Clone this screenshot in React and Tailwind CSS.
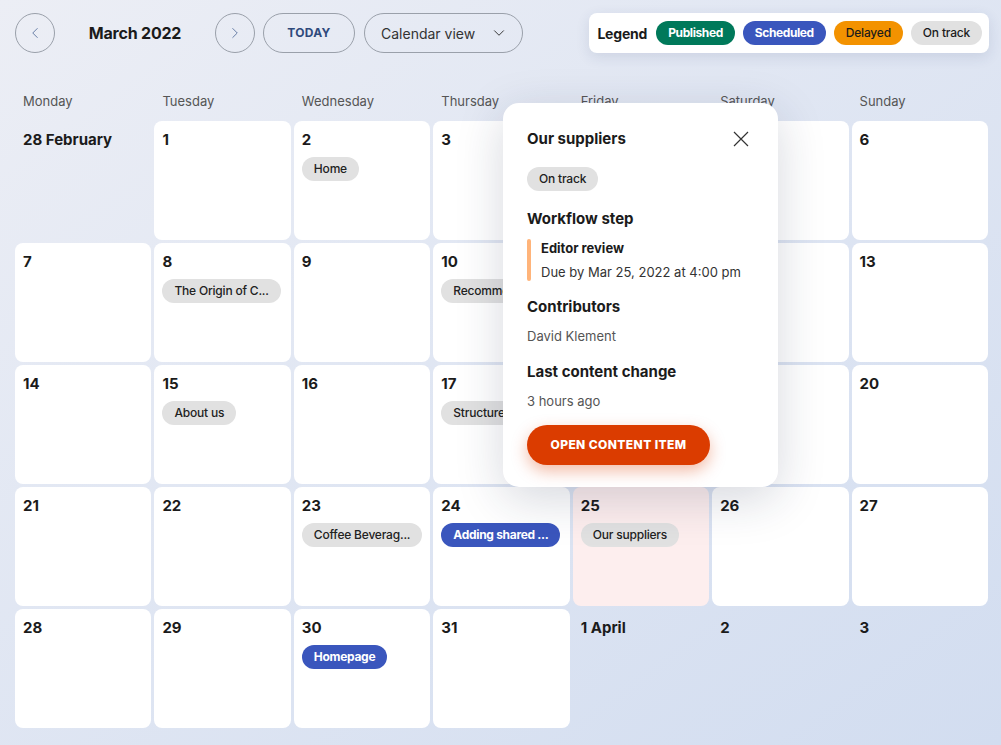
import React from 'react';
import { ChevronLeft, ChevronRight, ChevronDown } from 'lucide-react';

const DAYS = ['Monday', 'Tuesday', 'Wednesday', 'Thursday', 'Friday', 'Saturday', 'Sunday'];

const WEEKS = [
  [
    { label: '28 February', outside: true },
    { label: '1' },
    { label: '2', event: { title: 'Home' } },
    { label: '3' },
    { label: '4' },
    { label: '5' },
    { label: '6' },
  ],
  [
    { label: '7' },
    { label: '8', event: { title: 'The Origin of C...' } },
    { label: '9' },
    { label: '10', event: { title: 'Recommended...' } },
    { label: '11' },
    { label: '12' },
    { label: '13' },
  ],
  [
    { label: '14' },
    { label: '15', event: { title: 'About us' } },
    { label: '16' },
    { label: '17', event: { title: 'Structured content' } },
    { label: '18' },
    { label: '19' },
    { label: '20' },
  ],
  [
    { label: '21' },
    { label: '22' },
    { label: '23', event: { title: 'Coffee Beverag...' } },
    { label: '24', event: { title: 'Adding shared ...', scheduled: true } },
    { label: '25', today: true, event: { title: 'Our suppliers' } },
    { label: '26' },
    { label: '27' },
  ],
  [
    { label: '28' },
    { label: '29' },
    { label: '30', event: { title: 'Homepage', scheduled: true } },
    { label: '31' },
    { label: '1 April', outside: true },
    { label: '2', outside: true },
    { label: '3', outside: true },
  ],
];

function EventPill({ event }) {
  if (event.scheduled) {
    return (
      <div className="mt-[7px] inline-flex max-w-full h-6 items-center rounded-full bg-[#3a56bd] px-3 text-[12px] font-bold tracking-[-0.3px] text-white whitespace-nowrap overflow-hidden">
        {event.title}
      </div>
    );
  }
  return (
    <div className="mt-[7px] inline-flex max-w-full h-6 items-center rounded-full bg-[#e1e1e1] px-3 text-[12px] font-medium tracking-[-0.2px] text-[#222] whitespace-nowrap overflow-hidden">
      {event.title}
    </div>
  );
}

function DayCell({ day }) {
  let cls = 'h-[119px] rounded-lg pl-[8px] pr-[6px] pt-[9px] overflow-hidden';
  if (day.today) cls += ' bg-[#fdeeee]';
  else if (!day.outside) cls += ' bg-white';
  return (
    <div className={cls}>
      <div className="text-[15px] leading-5 font-bold text-[#1b1b1b]">{day.label}</div>
      {day.event && <EventPill event={day.event} />}
    </div>
  );
}

function Legend() {
  return (
    <div className="ml-auto mr-[-1px] flex h-10 items-center gap-2 rounded-lg bg-white pl-2 pr-[7px] shadow-[0_4px_14px_rgba(40,60,110,0.12)]">
      <span className="mr-[1px] text-[14px] font-bold tracking-[-0.2px] text-[#1b1b1b]">Legend</span>
      <span className="flex h-6 items-center rounded-full bg-[#00795a] px-3 text-[12px] font-bold tracking-[-0.4px] text-white">Published</span>
      <span className="flex h-6 items-center rounded-full bg-[#3a56bd] px-3 text-[12px] font-bold tracking-[-0.4px] text-white">Scheduled</span>
      <span className="flex h-6 items-center rounded-full bg-[#f39200] px-3 text-[12px] font-medium tracking-[-0.2px] text-[#1b1b1b]">Delayed</span>
      <span className="flex h-6 items-center rounded-full bg-[#e1e1e1] px-3 text-[12px] font-medium tracking-[-0.2px] text-[#1b1b1b]">On track</span>
    </div>
  );
}

function Popover() {
  return (
    <div className="absolute left-[503px] top-[103px] w-[275px] h-[384px] rounded-2xl bg-white pl-6 pr-7 pt-[26px] shadow-[0_12px_48px_rgba(30,40,70,0.18)]">
      <div className="flex items-center justify-between">
        <h3 className="text-[15px] leading-5 font-bold text-[#1b1b1b]">Our suppliers</h3>
        <svg width="16" height="16" viewBox="0 0 16 16" className="mr-[1px]">
          <path d="M1 1 L15 15 M15 1 L1 15" stroke="#333" strokeWidth="1.2" fill="none" />
        </svg>
      </div>
      <div className="mt-[18px] inline-flex h-6 items-center rounded-full bg-[#e1e1e1] px-3 text-[12px] font-medium tracking-[-0.2px] text-[#222]">
        On track
      </div>
      <h4 className="mt-[18px] text-[15px] leading-5 font-bold text-[#1b1b1b]">Workflow step</h4>
      <div className="mt-[10px] flex gap-[10px]">
        <div className="w-1 rounded-full bg-[#ffb47a]" />
        <div>
          <div className="text-[13px] leading-[18px] font-bold text-[#1b1b1b]">Editor review</div>
          <div className="mt-[6px] text-[13px] leading-[18px] text-[#333]">Due by Mar 25, 2022 at 4:00 pm</div>
        </div>
      </div>
      <h4 className="mt-[16px] text-[15px] leading-5 font-bold text-[#1b1b1b]">Contributors</h4>
      <div className="mt-[10px] text-[13px] leading-[18px] text-[#555]">David Klement</div>
      <h4 className="mt-[17px] text-[15px] leading-5 font-bold text-[#1b1b1b]">Last content change</h4>
      <div className="mt-[10px] text-[13px] leading-[18px] text-[#555]">3 hours ago</div>
      <button className="mt-[15px] flex h-10 w-[183px] items-center justify-center rounded-full bg-[#db3c00] text-[12px] font-extrabold tracking-[0.4px] text-white shadow-[0_6px_16px_rgba(219,60,0,0.35)]">
        OPEN CONTENT ITEM
      </button>
    </div>
  );
}

export default function App() {
  return (
    <div
      className="relative h-[745px] w-full overflow-hidden bg-linear-to-br from-[#eceef5] to-[#d2ddf0] pl-[15px] pr-[13px] pt-[13px]"
      style={{ fontFamily: 'Inter, "Noto Sans", sans-serif' }}
    >
      <div className="flex h-10 items-center">
        <button className="flex h-10 w-10 items-center justify-center rounded-full border border-[#9aa0aa]">
          <ChevronLeft size={18} strokeWidth={1} className="text-[#3d5a8c]" />
        </button>
        <div className="w-[160px] text-center text-[16px] font-bold tracking-[-0.2px] text-[#1b1b1b]">March 2022</div>
        <button className="flex h-10 w-10 items-center justify-center rounded-full border border-[#9aa0aa]">
          <ChevronRight size={18} strokeWidth={1} className="text-[#3d5a8c]" />
        </button>
        <button className="ml-2 flex h-10 w-[92px] items-center justify-center rounded-full border border-[#9aa0aa] text-[12px] font-bold tracking-[0.3px] text-[#2f4a7c]">
          TODAY
        </button>
        <button className="ml-[9px] flex h-10 w-[159px] items-center justify-between rounded-full border border-[#9aa0aa] pl-4 pr-[14px] text-[14px] text-[#333]">
          Calendar view
          <ChevronDown size={18} strokeWidth={1.3} className="text-[#333]" />
        </button>
        <Legend />
      </div>

      <div className="mt-[38px] grid h-5 grid-cols-7 gap-[3px]">
        {DAYS.map((d) => (
          <div key={d} className="pl-2 text-[13px] leading-5 text-[#555]">{d}</div>
        ))}
      </div>

      <div className="mt-[10px] grid grid-cols-7 gap-[3px]">
        {WEEKS.flat().map((day, i) => (
          <DayCell key={i} day={day} />
        ))}
      </div>

      <Popover />
    </div>
  );
}
